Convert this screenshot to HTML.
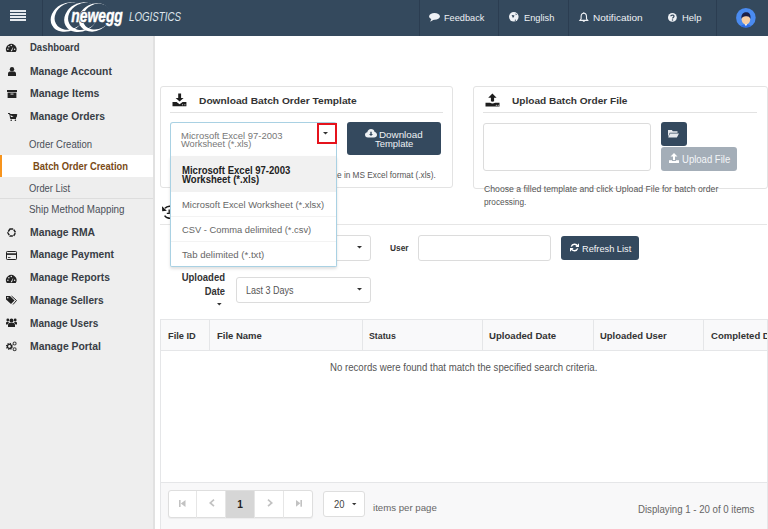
<!DOCTYPE html><html><head><meta charset="utf-8"><style>
html,body{margin:0;padding:0;width:768px;height:529px;overflow:hidden;background:#fff;font-family:"Liberation Sans",sans-serif;}
.r{position:absolute;box-sizing:border-box;}
svg{position:absolute;overflow:visible;}
</style></head><body>
<div class="r" style="left:0px;top:0px;width:768.00px;height:36.00px;background:#34495d;"></div>
<div class="r" style="left:42px;top:0px;width:1.00px;height:36.00px;background:#2b3d51;"></div>
<div class="r" style="left:10px;top:10px;width:16.00px;height:2.00px;background:#e6eaef;"></div>
<div class="r" style="left:10px;top:13px;width:16.00px;height:2.00px;background:#e6eaef;"></div>
<div class="r" style="left:10px;top:16px;width:16.00px;height:2.00px;background:#e6eaef;"></div>
<div class="r" style="left:10px;top:19px;width:16.00px;height:2.00px;background:#e6eaef;"></div>
<svg style="left:0;top:0" width="200" height="36" viewBox="0 0 200 36"><mask id="m1"><rect x="0" y="0" width="200" height="36" fill="#000"/><ellipse cx="67.5" cy="17" rx="17.5" ry="14" transform="rotate(-28 67.5 17)" fill="#fff"/><ellipse cx="69.8" cy="16.2" rx="15.8" ry="12.9" transform="rotate(-28 69.8 16.2)" fill="#000"/></mask><rect x="0" y="0" width="200" height="36" fill="#fff" mask="url(#m1)"/><mask id="m2"><rect x="0" y="0" width="200" height="36" fill="#000"/><ellipse cx="81" cy="17.2" rx="17.5" ry="14" transform="rotate(-28 81 17.2)" fill="#fff"/><ellipse cx="83.3" cy="16.4" rx="15.8" ry="12.9" transform="rotate(-28 83.3 16.4)" fill="#000"/></mask><rect x="0" y="0" width="200" height="36" fill="#fff" mask="url(#m2)"/><mask id="m3"><rect x="0" y="0" width="200" height="36" fill="#000"/><ellipse cx="94.5" cy="17.4" rx="16.5" ry="13.5" transform="rotate(-28 94.5 17.4)" fill="#fff"/><ellipse cx="96.8" cy="16.6" rx="14.8" ry="12.4" transform="rotate(-28 96.8 16.6)" fill="#000"/></mask><rect x="0" y="0" width="200" height="36" fill="#fff" mask="url(#m3)"/></svg>
<svg style="left:0;top:0" width="200" height="36"><text x="71.3" y="22" font-family="Liberation Sans" font-size="19" font-weight="bold" font-style="italic" fill="#34495d" stroke="#34495d" stroke-width="2.2" textLength="51.5" lengthAdjust="spacingAndGlyphs">newegg</text><text x="71.3" y="22" font-family="Liberation Sans" font-size="19" font-weight="bold" font-style="italic" fill="#fff" stroke="#fff" stroke-width="0.45" textLength="51.5" lengthAdjust="spacingAndGlyphs">newegg</text></svg>
<svg style="left:128.70px;top:7.40px" width="600" height="19.20"><text x="0" y="14.40" font-family="Liberation Sans" font-size="12" font-weight="normal" fill="#dfe5ec" text-anchor="start" textLength="51.9" lengthAdjust="spacingAndGlyphs" font-style="italic" >LOGISTICS</text></svg>
<div class="r" style="left:419px;top:0px;width:1.00px;height:36.00px;background:#2b3d51;"></div>
<div class="r" style="left:498px;top:0px;width:1.00px;height:36.00px;background:#2b3d51;"></div>
<div class="r" style="left:568px;top:0px;width:1.00px;height:36.00px;background:#2b3d51;"></div>
<div class="r" style="left:716px;top:0px;width:1.00px;height:36.00px;background:#2b3d51;"></div>
<svg style="left:444.30px;top:9.24px" width="600" height="15.68"><text x="0" y="11.76" font-family="Liberation Sans" font-size="9.8" font-weight="normal" fill="#eef1f5" text-anchor="start" textLength="40.4" lengthAdjust="spacingAndGlyphs" >Feedback</text></svg>
<svg style="left:523.80px;top:9.24px" width="600" height="15.68"><text x="0" y="11.76" font-family="Liberation Sans" font-size="9.8" font-weight="normal" fill="#eef1f5" text-anchor="start" textLength="30.3" lengthAdjust="spacingAndGlyphs" >English</text></svg>
<svg style="left:593.00px;top:9.24px" width="600" height="15.68"><text x="0" y="11.76" font-family="Liberation Sans" font-size="9.8" font-weight="normal" fill="#eef1f5" text-anchor="start" textLength="49.7" lengthAdjust="spacingAndGlyphs" >Notification</text></svg>
<svg style="left:682.00px;top:9.24px" width="600" height="15.68"><text x="0" y="11.76" font-family="Liberation Sans" font-size="9.8" font-weight="normal" fill="#eef1f5" text-anchor="start" textLength="19.5" lengthAdjust="spacingAndGlyphs" >Help</text></svg>
<svg style="left:429.2px;top:12.8px" width="11" height="9" viewBox="0 0 11 9"><ellipse cx="5.5" cy="3.4" rx="5.4" ry="3.4" fill="#eef1f5"/><path d="M2.5 5.5 L1.2 8.7 L5.5 6.2Z" fill="#eef1f5"/></svg>
<svg style="left:509.4px;top:11.6px" width="10" height="10" viewBox="0 0 10 10"><circle cx="4.8" cy="4.8" r="4.8" fill="#eef1f5"/><path d="M2.6 3 C3.6 2.6 4.4 3.6 5.2 3 C5.6 4.2 4.8 5.6 3.8 5.8 Z M6.5 1.2 L8 2.5 L6.8 3.2Z M6 7 L7 8.4 L5.8 9.3Z" fill="#34495d"/></svg>
<svg style="left:579px;top:11.5px" width="10" height="11" viewBox="0 0 10 11"><path d="M4.8 1.3 C2.6 1.3 2.1 3 2.1 4.8 L2.1 6.8 L0.9 8.4 L8.7 8.4 L7.5 6.8 L7.5 4.8 C7.5 3 7 1.3 4.8 1.3Z" fill="none" stroke="#eef1f5" stroke-width="1.1"/><path d="M3.6 9.2 C3.9 10.4 5.7 10.4 6 9.2Z" fill="#eef1f5"/><circle cx="4.8" cy="0.9" r="0.7" fill="#eef1f5"/></svg>
<svg style="left:668.4px;top:12.9px" width="9" height="9" viewBox="0 0 9 9"><circle cx="4.4" cy="4.4" r="4.4" fill="#eef1f5"/><path d="M2.8 3.3 C2.8 1.6 6 1.6 6 3.3 C6 4.4 4.5 4.4 4.5 5.6" fill="none" stroke="#34495d" stroke-width="1.3"/><circle cx="4.5" cy="7" r="0.75" fill="#34495d"/></svg>
<svg style="left:736.4px;top:7.6px" width="20" height="20" viewBox="0 0 20 20"><defs><clipPath id="av"><circle cx="9.9" cy="9.8" r="9.8"/></clipPath></defs><circle cx="9.9" cy="9.8" r="9.8" fill="#4a8bf0"/><g clip-path="url(#av)"><ellipse cx="9.9" cy="21.5" rx="6.5" ry="5.5" fill="#2f6de4"/></g><path d="M8.2 15.5 L11.6 15.5 L9.9 18.3Z" fill="#f4f6fa"/><ellipse cx="9.9" cy="11.6" rx="4.3" ry="4.7" fill="#f6cda4"/><path d="M5.4 10.8 C5 5.5 8 4.2 10 4.2 C13 4.2 15 6 14.5 10.8 C13.6 8.4 11.6 7.8 9.6 8.3 C7.6 8.5 6.1 9.2 5.4 10.8Z" fill="#1c1f48"/></svg>
<div class="r" style="left:0px;top:36px;width:153.00px;height:493.00px;background:#eeeeee;"></div>
<div class="r" style="left:153px;top:36px;width:2.00px;height:493.00px;background:#e1e1e1;"></div>
<svg style="left:29.50px;top:39.02px" width="600" height="16.64"><text x="0" y="12.48" font-family="Liberation Sans" font-size="10.4" font-weight="bold" fill="#383d45" text-anchor="start" textLength="49.6" lengthAdjust="spacingAndGlyphs" >Dashboard</text></svg>
<svg style="left:29.50px;top:62.52px" width="600" height="16.64"><text x="0" y="12.48" font-family="Liberation Sans" font-size="10.4" font-weight="bold" fill="#383d45" text-anchor="start" textLength="81.8" lengthAdjust="spacingAndGlyphs" >Manage Account</text></svg>
<svg style="left:29.50px;top:85.42px" width="600" height="16.64"><text x="0" y="12.48" font-family="Liberation Sans" font-size="10.4" font-weight="bold" fill="#383d45" text-anchor="start" textLength="69.4" lengthAdjust="spacingAndGlyphs" >Manage Items</text></svg>
<svg style="left:29.50px;top:108.12px" width="600" height="16.64"><text x="0" y="12.48" font-family="Liberation Sans" font-size="10.4" font-weight="bold" fill="#383d45" text-anchor="start" textLength="74.9" lengthAdjust="spacingAndGlyphs" >Manage Orders</text></svg>
<svg style="left:29.50px;top:224.42px" width="600" height="16.64"><text x="0" y="12.48" font-family="Liberation Sans" font-size="10.4" font-weight="bold" fill="#383d45" text-anchor="start" textLength="65.1" lengthAdjust="spacingAndGlyphs" >Manage RMA</text></svg>
<svg style="left:29.50px;top:246.12px" width="600" height="16.64"><text x="0" y="12.48" font-family="Liberation Sans" font-size="10.4" font-weight="bold" fill="#383d45" text-anchor="start" textLength="84" lengthAdjust="spacingAndGlyphs" >Manage Payment</text></svg>
<svg style="left:29.50px;top:269.12px" width="600" height="16.64"><text x="0" y="12.48" font-family="Liberation Sans" font-size="10.4" font-weight="bold" fill="#383d45" text-anchor="start" textLength="80" lengthAdjust="spacingAndGlyphs" >Manage Reports</text></svg>
<svg style="left:29.50px;top:291.72px" width="600" height="16.64"><text x="0" y="12.48" font-family="Liberation Sans" font-size="10.4" font-weight="bold" fill="#383d45" text-anchor="start" textLength="73.6" lengthAdjust="spacingAndGlyphs" >Manage Sellers</text></svg>
<svg style="left:29.50px;top:314.82px" width="600" height="16.64"><text x="0" y="12.48" font-family="Liberation Sans" font-size="10.4" font-weight="bold" fill="#383d45" text-anchor="start" textLength="68.3" lengthAdjust="spacingAndGlyphs" >Manage Users</text></svg>
<svg style="left:29.50px;top:338.12px" width="600" height="16.64"><text x="0" y="12.48" font-family="Liberation Sans" font-size="10.4" font-weight="bold" fill="#383d45" text-anchor="start" textLength="71" lengthAdjust="spacingAndGlyphs" >Manage Portal</text></svg>
<div class="r" style="left:0px;top:154.5px;width:153.00px;height:22.10px;background:#fff;"></div>
<div class="r" style="left:0px;top:154.5px;width:2.00px;height:22.10px;background:#f7941d;"></div>
<div class="r" style="left:0px;top:198px;width:153.00px;height:1.00px;background:#dddddd;"></div>
<svg style="left:28.60px;top:135.78px" width="600" height="16.16"><text x="0" y="12.12" font-family="Liberation Sans" font-size="10.1" font-weight="normal" fill="#4a4f58" text-anchor="start" textLength="63.1" lengthAdjust="spacingAndGlyphs" >Order Creation</text></svg>
<svg style="left:33.00px;top:157.80px" width="600" height="16.00"><text x="0" y="12.00" font-family="Liberation Sans" font-size="10" font-weight="bold" fill="#7a4b16" text-anchor="start" textLength="95" lengthAdjust="spacingAndGlyphs" >Batch Order Creation</text></svg>
<svg style="left:28.60px;top:179.88px" width="600" height="16.16"><text x="0" y="12.12" font-family="Liberation Sans" font-size="10.1" font-weight="normal" fill="#4a4f58" text-anchor="start" textLength="41.1" lengthAdjust="spacingAndGlyphs" >Order List</text></svg>
<svg style="left:28.60px;top:201.38px" width="600" height="16.16"><text x="0" y="12.12" font-family="Liberation Sans" font-size="10.1" font-weight="normal" fill="#4a4f58" text-anchor="start" textLength="95.5" lengthAdjust="spacingAndGlyphs" >Ship Method Mapping</text></svg>
<svg style="left:6.3px;top:44px" width="10.5" height="8" viewBox="0 0 10.5 8"><path d="M0.78 8 A5.25 5.25 0 1 1 9.72 8 Z" fill="#222"/><path d="M4.6 7.3 L7.4 2.6 L6 7.3Z" fill="#eee"/><circle cx="1.9" cy="5.3" r="0.75" fill="#eee"/><circle cx="2.9" cy="2.7" r="0.75" fill="#eee"/><circle cx="5.25" cy="1.6" r="0.75" fill="#eee"/><circle cx="8.6" cy="5.3" r="0.75" fill="#eee"/></svg>
<svg style="left:6.3px;top:274.9px" width="10.5" height="8" viewBox="0 0 10.5 8"><path d="M0.78 8 A5.25 5.25 0 1 1 9.72 8 Z" fill="#222"/><path d="M4.6 7.3 L7.4 2.6 L6 7.3Z" fill="#eee"/><circle cx="1.9" cy="5.3" r="0.75" fill="#eee"/><circle cx="2.9" cy="2.7" r="0.75" fill="#eee"/><circle cx="5.25" cy="1.6" r="0.75" fill="#eee"/><circle cx="8.6" cy="5.3" r="0.75" fill="#eee"/></svg>
<svg style="left:7.5px;top:66.5px" width="8" height="9" viewBox="0 0 8 9"><circle cx="4" cy="2.2" r="2.2" fill="#222"/><path d="M0 9 L0 6.5 C0 5 1.5 4.6 2.5 4.6 L5.5 4.6 C6.5 4.6 8 5 8 6.5 L8 9Z" fill="#222"/></svg>
<svg style="left:6.7px;top:90px" width="10" height="8" viewBox="0 0 10 8"><rect x="0" y="0" width="10" height="2" fill="#222"/><rect x="0.6" y="2.6" width="8.8" height="5.4" fill="#222"/><rect x="3.5" y="3.6" width="3" height="0.9" fill="#eee"/></svg>
<svg style="left:7.5px;top:113px" width="9" height="8" viewBox="0 0 9 8"><path d="M0 0.5 L1.8 0.5 L2.6 5.5 L8 5.5 M2 1.5 L8.8 1.5 L8 4.5 L2.4 4.5" fill="#222" stroke="#222" stroke-width="1"/><circle cx="3.2" cy="7.2" r="0.8" fill="#222"/><circle cx="7.4" cy="7.2" r="0.8" fill="#222"/></svg>
<svg style="left:6.6px;top:227.8px" width="10" height="9" viewBox="0 0 10 9"><path d="M3 1 L6.4 1 L8.6 4.5 L6.6 8 L2.7 8 L0.7 4.5 Z" fill="none" stroke="#222" stroke-width="1.5" stroke-linejoin="round" stroke-dasharray="3.2 0.9"/></svg>
<svg style="left:6.3px;top:251px" width="11" height="9" viewBox="0 0 11 9"><rect x="0.5" y="0.5" width="10" height="8" rx="0.8" fill="none" stroke="#222" stroke-width="1"/><rect x="0.5" y="2.3" width="10" height="1.6" fill="#222"/><rect x="2" y="6" width="2.5" height="0.8" fill="#222"/></svg>
<svg style="left:6.3px;top:296.3px" width="11" height="9" viewBox="0 0 11 9"><path d="M0 0 L4 0 L8.5 4.5 L5 8 L0 3.5Z" fill="#222"/><path d="M5.5 0 L10.5 4.5 L7 8.5" fill="none" stroke="#222" stroke-width="1"/><circle cx="1.8" cy="1.8" r="0.8" fill="#eee"/></svg>
<svg style="left:6.3px;top:318.4px" width="11" height="9" viewBox="0 0 11 9"><circle cx="5.5" cy="2.4" r="2" fill="#222"/><circle cx="1.8" cy="2" r="1.4" fill="#222"/><circle cx="9.2" cy="2" r="1.4" fill="#222"/><path d="M2 9 L2 6.5 C2 5 3.5 4.7 5.5 4.7 C7.5 4.7 9 5 9 6.5 L9 9Z" fill="#222"/><path d="M0 6.5 L0 5 C0 4 1 3.8 2 3.8 L3 4.3 L1.5 6.5Z M11 6.5 L11 5 C11 4 10 3.8 9 3.8 L8 4.3 L9.5 6.5Z" fill="#222"/></svg>
<svg style="left:5px;top:339px" width="13" height="13" viewBox="0 0 13 13"><g fill="none" stroke="#222"><circle cx="4.46" cy="7.4" r="2.6" stroke-width="1.9" stroke-dasharray="1.1 0.93"/><circle cx="4.46" cy="7.4" r="2" stroke-width="1.3"/><circle cx="9.6" cy="4.5" r="1.5" stroke-width="1.1" stroke="#444"/><circle cx="9.6" cy="10.3" r="1.5" stroke-width="1.1" stroke="#444"/></g></svg>
<div class="r" style="left:160px;top:85.5px;width:293.00px;height:102.80px;border:1px solid #e3e3e3;border-radius:3px;background:#fff;"></div>
<svg style="left:171.5px;top:92.5px" width="15" height="14" viewBox="0 0 15 14"><path d="M6.2 0.5 L9.1 0.5 L9.1 5 L11.6 5 L7.6 8.6 L3.6 5 L6.2 5Z" fill="#1e1e1e"/><path d="M0.5 8.9 L4.6 8.9 L7.6 11.2 L10.6 8.9 L14.4 8.9 L14.4 13.2 L0.5 13.2Z" fill="#1e1e1e"/><circle cx="10.6" cy="11.7" r="0.55" fill="#fff"/><circle cx="12.9" cy="11.7" r="0.55" fill="#fff"/></svg>
<svg style="left:199.00px;top:91.94px" width="600" height="15.68"><text x="0" y="11.76" font-family="Liberation Sans" font-size="9.8" font-weight="bold" fill="#333" text-anchor="start" textLength="157.7" lengthAdjust="spacingAndGlyphs" >Download Batch Order Template</text></svg>
<div class="r" style="left:170px;top:112px;width:273.00px;height:1.00px;background:#e2e2e2;"></div>
<div class="r" style="left:347px;top:122.1px;width:93.80px;height:33.30px;background:#34495e;border-radius:3px;"></div>
<svg style="left:365px;top:128.8px" width="12" height="9" viewBox="0 0 12 9"><path d="M3 8.5 C1 8.5 0 7.2 0 5.7 C0 4.3 1 3.3 2.3 3.3 C2.5 1.4 4 0 6 0 C8 0 9.3 1.3 9.6 2.9 C11 3.1 12 4.2 12 5.8 C12 7.5 10.8 8.5 9 8.5Z" fill="#eef1f4"/><path d="M5.3 2.8 L6.7 2.8 L6.7 5 L8 5 L6 7 L4 5 L5.3 5Z" fill="#34495e"/></svg>
<svg style="left:379.00px;top:126.14px" width="600" height="15.68"><text x="0" y="11.76" font-family="Liberation Sans" font-size="9.8" font-weight="normal" fill="#eef1f4" text-anchor="start" textLength="43.7" lengthAdjust="spacingAndGlyphs" >Download</text></svg>
<svg style="left:374.90px;top:134.84px" width="600" height="15.68"><text x="0" y="11.76" font-family="Liberation Sans" font-size="9.8" font-weight="normal" fill="#eef1f4" text-anchor="start" textLength="38.3" lengthAdjust="spacingAndGlyphs" >Template</text></svg>
<svg style="left:337.20px;top:166.96px" width="600" height="14.72"><text x="0" y="11.04" font-family="Liberation Sans" font-size="9.2" font-weight="normal" fill="#555" text-anchor="start" textLength="98.7" lengthAdjust="spacingAndGlyphs" >e in MS Excel format (.xls).</text></svg>
<div class="r" style="left:169.5px;top:122.2px;width:167.50px;height:35.80px;border:1px solid #a9d1e3;border-bottom:none;background:#fff;border-radius:3px 3px 0 0;"></div>
<svg style="left:180.90px;top:127.87px" width="600" height="15.04"><text x="0" y="11.28" font-family="Liberation Sans" font-size="9.4" font-weight="normal" fill="#777" text-anchor="start" textLength="101.6" lengthAdjust="spacingAndGlyphs" >Microsoft Excel 97-2003</text></svg>
<svg style="left:180.90px;top:136.42px" width="600" height="15.04"><text x="0" y="11.28" font-family="Liberation Sans" font-size="9.4" font-weight="normal" fill="#777" text-anchor="start" textLength="70.3" lengthAdjust="spacingAndGlyphs" >Worksheet (*.xls)</text></svg>
<div class="r" style="left:316.7px;top:122.6px;width:20.50px;height:21.30px;border:2.4px solid #e5131c;"></div>
<svg style="left:323.2px;top:132.2px" width="6" height="4" viewBox="0 0 6 4"><path d="M0 0 L5 0 L2.5 2.6Z" fill="#333"/></svg>
<div class="r" style="left:473px;top:85.5px;width:295.00px;height:103.00px;border:1px solid #e3e3e3;border-radius:3px;background:#fff;"></div>
<svg style="left:485px;top:93px" width="15" height="14" viewBox="0 0 15 14"><path d="M7.4 0.5 L11.6 4.8 L9.1 4.8 L9.1 8.3 Q7.5 9 5.9 8.3 L5.9 4.8 L3.2 4.8 Z" fill="#1e1e1e"/><path d="M0.5 9.8 L5 9.8 Q7.5 11.3 10 9.8 L14.5 9.8 L14.5 13.6 L0.5 13.6 Z" fill="#1e1e1e"/><circle cx="11.3" cy="12.2" r="0.55" fill="#fff"/><circle cx="13.2" cy="12.2" r="0.55" fill="#fff"/></svg>
<svg style="left:512.20px;top:92.14px" width="600" height="15.68"><text x="0" y="11.76" font-family="Liberation Sans" font-size="9.8" font-weight="bold" fill="#333" text-anchor="start" textLength="115.4" lengthAdjust="spacingAndGlyphs" >Upload Batch Order File</text></svg>
<div class="r" style="left:483px;top:112.2px;width:274.00px;height:1.00px;background:#e2e2e2;"></div>
<div class="r" style="left:483.4px;top:122.6px;width:167.20px;height:48.00px;border:1px solid #dcdcdc;border-radius:3px;"></div>
<div class="r" style="left:660.6px;top:122.3px;width:26.30px;height:23.50px;background:#34495e;border-radius:3px;"></div>
<svg style="left:668.1px;top:129.3px" width="11" height="9" viewBox="0 0 11 9"><path d="M0 1 L0 8 L1.8 3.8 L9.5 3.8 L9.5 2.3 L4.8 2.3 L3.9 1Z" fill="#e6e9ed"/><path d="M2 4.6 L11 4.6 L8.9 8.4 L0.2 8.4Z" fill="#e6e9ed"/></svg>
<div class="r" style="left:660.8px;top:146.9px;width:76.60px;height:23.90px;background:#a4aeb8;border-radius:3px;"></div>
<svg style="left:669px;top:153px" width="10" height="10" viewBox="0 0 10 10"><path d="M4 3.5 L6 3.5 L6 7 L4 7Z M5 0 L8.5 3.5 L1.5 3.5Z" fill="#fff"/><path d="M0 7.2 L0 10 L10 10 L10 7.2 L7 7.2 L7 8 L3 8 L3 7.2Z" fill="#fff"/></svg>
<svg style="left:682.00px;top:150.20px" width="600" height="16.80"><text x="0" y="12.60" font-family="Liberation Sans" font-size="10.5" font-weight="normal" fill="#f4f6f8" text-anchor="start" textLength="48.2" lengthAdjust="spacingAndGlyphs" >Upload File</text></svg>
<svg style="left:483.90px;top:181.54px" width="600" height="13.28"><text x="0" y="9.96" font-family="Liberation Sans" font-size="8.3" font-weight="normal" fill="#555" text-anchor="start" textLength="234.3" lengthAdjust="spacingAndGlyphs" >Choose a filled template and click Upload File for batch order</text></svg>
<svg style="left:483.90px;top:195.14px" width="600" height="13.28"><text x="0" y="9.96" font-family="Liberation Sans" font-size="8.3" font-weight="normal" fill="#555" text-anchor="start" textLength="42.3" lengthAdjust="spacingAndGlyphs" >processing.</text></svg>
<svg style="left:158px;top:202px" width="16" height="20" viewBox="0 0 16 20"><path d="M7 6.3 A6 6 0 1 1 6.6 13.6" fill="none" stroke="#1a1a1a" stroke-width="1.6"/><path d="M4 4.3 L4.2 9.3 L8.8 8.8Z" fill="#1a1a1a"/><path d="M11.2 7.5 L11.2 11.4 L8.8 11.4" fill="none" stroke="#1a1a1a" stroke-width="1.3"/></svg>
<div class="r" style="left:160px;top:224px;width:607.00px;height:1.00px;background:#e6e6e6;"></div>
<div class="r" style="left:236px;top:235.4px;width:134.70px;height:25.20px;border:1px solid #dcdcdc;border-radius:3px;background:#fff;"></div>
<svg style="left:357px;top:245.6px" width="6" height="4" viewBox="0 0 6 4"><path d="M0 0 L5 0 L2.5 2.6Z" fill="#333"/></svg>
<svg style="left:390.30px;top:240.02px" width="600" height="15.04"><text x="0" y="11.28" font-family="Liberation Sans" font-size="9.4" font-weight="bold" fill="#333" text-anchor="start" textLength="18.5" lengthAdjust="spacingAndGlyphs" >User</text></svg>
<div class="r" style="left:418.3px;top:235.2px;width:133.00px;height:25.50px;border:1px solid #dcdcdc;border-radius:3px;background:#fff;"></div>
<div class="r" style="left:561.2px;top:236px;width:77.60px;height:24.00px;background:#34495e;border-radius:3px;"></div>
<svg style="left:570.3px;top:243.2px" width="9" height="9" viewBox="0 0 9 9"><path d="M7.6 3.2 A3.4 3.4 0 0 0 1.3 3.6 M1.4 5.8 A3.4 3.4 0 0 0 7.7 5.4" fill="none" stroke="#fff" stroke-width="1.4"/><path d="M9 0.3 L9 4 L5.4 4Z M0 8.7 L0 5 L3.6 5Z" fill="#fff"/></svg>
<svg style="left:582.30px;top:239.84px" width="600" height="15.68"><text x="0" y="11.76" font-family="Liberation Sans" font-size="9.8" font-weight="normal" fill="#f4f6f8" text-anchor="start" textLength="49.2" lengthAdjust="spacingAndGlyphs" >Refresh List</text></svg>
<svg style="left:-374.60px;top:269.30px" width="600" height="16.00"><text x="600" y="12.00" font-family="Liberation Sans" font-size="10" font-weight="bold" fill="#333" text-anchor="end" textLength="43.3" lengthAdjust="spacingAndGlyphs" >Uploaded</text></svg>
<svg style="left:-374.60px;top:282.54px" width="600" height="16.48"><text x="600" y="12.36" font-family="Liberation Sans" font-size="10.3" font-weight="bold" fill="#333" text-anchor="end" textLength="20.3" lengthAdjust="spacingAndGlyphs" >Date</text></svg>
<svg style="left:217px;top:302.7px" width="5" height="3" viewBox="0 0 5 3"><path d="M0 0 L4.6 0 L2.3 2.5Z" fill="#333"/></svg>
<div class="r" style="left:236.3px;top:277.4px;width:134.40px;height:25.20px;border:1px solid #dcdcdc;border-radius:3px;background:#fff;"></div>
<svg style="left:246.40px;top:281.52px" width="600" height="16.64"><text x="0" y="12.48" font-family="Liberation Sans" font-size="10.4" font-weight="normal" fill="#555" text-anchor="start" textLength="47.6" lengthAdjust="spacingAndGlyphs" >Last 3 Days</text></svg>
<svg style="left:357px;top:288px" width="6" height="4" viewBox="0 0 6 4"><path d="M0 0 L5 0 L2.5 2.6Z" fill="#333"/></svg>
<div class="r" style="left:160px;top:319.3px;width:608.00px;height:209.70px;border:1px solid #e5e6e8;background:#fff;"></div>
<div class="r" style="left:161px;top:320.3px;width:606.00px;height:30.00px;background:#f9f9fa;"></div>
<div class="r" style="left:161px;top:350px;width:606.00px;height:1.00px;background:#e5e6e8;"></div>
<div class="r" style="left:209.4px;top:320px;width:1.00px;height:30.50px;background:#e5e6e8;"></div>
<div class="r" style="left:361.8px;top:320px;width:1.00px;height:30.50px;background:#e5e6e8;"></div>
<div class="r" style="left:481.6px;top:320px;width:1.00px;height:30.50px;background:#e5e6e8;"></div>
<div class="r" style="left:592.6px;top:320px;width:1.00px;height:30.50px;background:#e5e6e8;"></div>
<div class="r" style="left:702.8px;top:320px;width:1.00px;height:30.50px;background:#e5e6e8;"></div>
<svg style="left:167.80px;top:326.82px" width="600" height="15.84"><text x="0" y="11.88" font-family="Liberation Sans" font-size="9.9" font-weight="bold" fill="#333" text-anchor="start" textLength="27.7" lengthAdjust="spacingAndGlyphs" >File ID</text></svg>
<svg style="left:216.70px;top:326.82px" width="600" height="15.84"><text x="0" y="11.88" font-family="Liberation Sans" font-size="9.9" font-weight="bold" fill="#333" text-anchor="start" textLength="44.8" lengthAdjust="spacingAndGlyphs" >File Name</text></svg>
<svg style="left:369.10px;top:326.82px" width="600" height="15.84"><text x="0" y="11.88" font-family="Liberation Sans" font-size="9.9" font-weight="bold" fill="#333" text-anchor="start" textLength="26.8" lengthAdjust="spacingAndGlyphs" >Status</text></svg>
<svg style="left:489.40px;top:326.82px" width="600" height="15.84"><text x="0" y="11.88" font-family="Liberation Sans" font-size="9.9" font-weight="bold" fill="#333" text-anchor="start" textLength="67.2" lengthAdjust="spacingAndGlyphs" >Uploaded Date</text></svg>
<svg style="left:599.70px;top:326.82px" width="600" height="15.84"><text x="0" y="11.88" font-family="Liberation Sans" font-size="9.9" font-weight="bold" fill="#333" text-anchor="start" textLength="66.8" lengthAdjust="spacingAndGlyphs" >Uploaded User</text></svg>
<svg style="left:710.50px;top:326.82px" width="600" height="15.84"><text x="0" y="11.88" font-family="Liberation Sans" font-size="9.9" font-weight="bold" fill="#333" text-anchor="start" textLength="72.5" lengthAdjust="spacingAndGlyphs" >Completed Date</text></svg>
<div class="r" style="left:767px;top:319.3px;width:1.00px;height:209.70px;background:#e5e6e8;"></div>
<svg style="left:330.00px;top:358.98px" width="600" height="16.16"><text x="0" y="12.12" font-family="Liberation Sans" font-size="10.1" font-weight="normal" fill="#555" text-anchor="start" textLength="267.3" lengthAdjust="spacingAndGlyphs" >No records were found that match the specified search criteria.</text></svg>
<div class="r" style="left:161px;top:482.3px;width:606.00px;height:1.00px;background:#e5e6e8;"></div>
<div class="r" style="left:161px;top:483.3px;width:606.00px;height:45.70px;background:#f8f8f9;"></div>
<div class="r" style="left:167.9px;top:490.4px;width:145.20px;height:28.10px;border:1px solid #dedede;border-radius:3px;background:#fff;box-shadow:0 1px 1px rgba(0,0,0,0.05);"></div>
<div class="r" style="left:225.2px;top:491.4px;width:29.20px;height:26.20px;background:#d6d6d6;"></div>
<div class="r" style="left:196.3px;top:491.4px;width:1.00px;height:26.20px;background:#e6e6e6;"></div>
<div class="r" style="left:225.2px;top:491.4px;width:1.00px;height:26.20px;background:#e6e6e6;"></div>
<div class="r" style="left:254.4px;top:491.4px;width:1.00px;height:26.20px;background:#e6e6e6;"></div>
<div class="r" style="left:283.1px;top:491.4px;width:1.00px;height:26.20px;background:#e6e6e6;"></div>
<svg style="left:178.5px;top:500px" width="8" height="7" viewBox="0 0 8 7"><rect x="0" y="0" width="1.6" height="7" fill="#c2c2c2"/><path d="M6.5 0 L6.5 7 L1.8 3.5Z" fill="#c2c2c2"/></svg>
<svg style="left:208.6px;top:499.4px" width="6" height="8" viewBox="0 0 6 8"><path d="M5 0.7 L1.3 3.9 L5 7.1" fill="none" stroke="#c2c2c2" stroke-width="1.7"/></svg>
<svg style="left:266.8px;top:499.4px" width="6" height="8" viewBox="0 0 6 8"><path d="M1 0.7 L4.7 3.9 L1 7.1" fill="none" stroke="#c2c2c2" stroke-width="1.7"/></svg>
<svg style="left:295.8px;top:500.2px" width="6" height="7" viewBox="0 0 6 7"><rect x="4.4" y="0" width="1.6" height="6.7" fill="#c2c2c2"/><path d="M0 0 L0 6.7 L4.4 3.35Z" fill="#c2c2c2"/></svg>
<svg style="left:-60.10px;top:495.76px" width="600" height="16.32"><text x="300" y="12.24" font-family="Liberation Sans" font-size="10.2" font-weight="bold" fill="#222" text-anchor="middle" >1</text></svg>
<div class="r" style="left:323.4px;top:491.4px;width:41.90px;height:26.00px;border:1px solid #dedede;border-radius:3px;background:#fff;"></div>
<svg style="left:333.75px;top:496.16px" width="600" height="16.32"><text x="0" y="12.24" font-family="Liberation Sans" font-size="10.2" font-weight="normal" fill="#444" text-anchor="start" textLength="10.5" lengthAdjust="spacingAndGlyphs" >20</text></svg>
<svg style="left:352px;top:503px" width="5" height="3" viewBox="0 0 5 3"><path d="M0 0 L4.4 0 L2.2 2.3Z" fill="#333"/></svg>
<svg style="left:373.10px;top:499.34px" width="600" height="15.68"><text x="0" y="11.76" font-family="Liberation Sans" font-size="9.8" font-weight="normal" fill="#666" text-anchor="start" textLength="63.8" lengthAdjust="spacingAndGlyphs" >items per page</text></svg>
<svg style="left:638.30px;top:499.98px" width="600" height="16.96"><text x="0" y="12.72" font-family="Liberation Sans" font-size="10.6" font-weight="normal" fill="#666" text-anchor="start" textLength="116.4" lengthAdjust="spacingAndGlyphs" >Displaying 1 - 20 of 0 items</text></svg>
<div class="r" style="left:169.5px;top:156px;width:167.50px;height:110.80px;border:1px solid #a9d1e3;border-top:none;background:#fff;box-shadow:0 2px 3px rgba(0,0,0,0.12);border-radius:0 0 2px 2px;"></div>
<div class="r" style="left:170.5px;top:156px;width:165.50px;height:35.60px;background:#f1f1f1;"></div>
<div class="r" style="left:171px;top:215.5px;width:165.00px;height:1.00px;background:#f3f3f3;"></div>
<div class="r" style="left:171px;top:240.5px;width:165.00px;height:1.00px;background:#f3f3f3;"></div>
<svg style="left:182.30px;top:161.80px" width="600" height="16.00"><text x="0" y="12.00" font-family="Liberation Sans" font-size="10" font-weight="bold" fill="#222" text-anchor="start" textLength="108.3" lengthAdjust="spacingAndGlyphs" >Microsoft Excel 97-2003</text></svg>
<svg style="left:182.30px;top:170.80px" width="600" height="16.00"><text x="0" y="12.00" font-family="Liberation Sans" font-size="10" font-weight="bold" fill="#222" text-anchor="start" textLength="77.1" lengthAdjust="spacingAndGlyphs" >Worksheet (*.xls)</text></svg>
<svg style="left:182.30px;top:197.26px" width="600" height="14.72"><text x="0" y="11.04" font-family="Liberation Sans" font-size="9.2" font-weight="normal" fill="#666" text-anchor="start" textLength="142.1" lengthAdjust="spacingAndGlyphs" >Microsoft Excel Worksheet (*.xlsx)</text></svg>
<svg style="left:182.30px;top:222.26px" width="600" height="14.72"><text x="0" y="11.04" font-family="Liberation Sans" font-size="9.2" font-weight="normal" fill="#666" text-anchor="start" textLength="129.2" lengthAdjust="spacingAndGlyphs" >CSV - Comma delimited (*.csv)</text></svg>
<svg style="left:182.30px;top:247.26px" width="600" height="14.72"><text x="0" y="11.04" font-family="Liberation Sans" font-size="9.2" font-weight="normal" fill="#666" text-anchor="start" textLength="82.3" lengthAdjust="spacingAndGlyphs" >Tab delimited (*.txt)</text></svg>
</body></html>
